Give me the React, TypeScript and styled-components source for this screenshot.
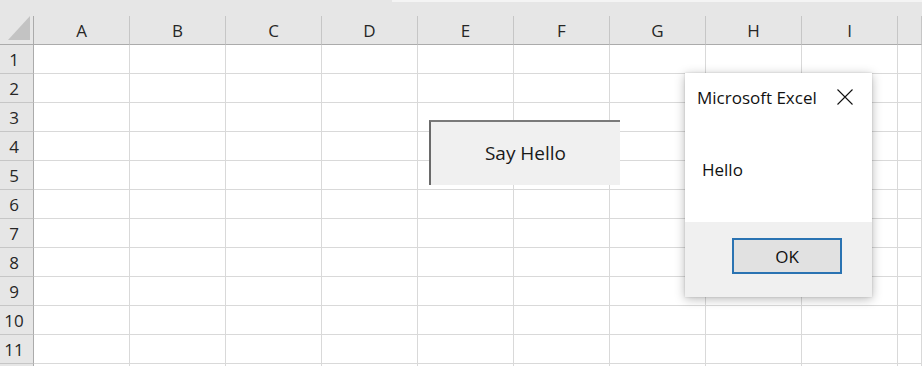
import React from "react";
import styled, { createGlobalStyle } from "styled-components";

const GlobalStyle = createGlobalStyle`
  html, body { margin: 0; padding: 0; background: #ffffff; }
  body { font-family: "Open Sans", "Noto Sans", "DejaVu Sans", sans-serif; }
`;

const COLS = ["A", "B", "C", "D", "E", "F", "G", "H", "I", ""];
const ROWS = ["1", "2", "3", "4", "5", "6", "7", "8", "9", "10", "11", ""];

const Page = styled.div`
  position: relative;
  width: 922px;
  height: 366px;
  overflow: hidden;
  background: #ffffff;
  display: flex;
  flex-direction: column;
`;

const TopStrip = styled.div`
  height: 16px;
  flex: none;
  background: #e6e6e6;
  display: flex;
  justify-content: flex-end;
`;

const TopHighlight = styled.div`
  width: 530px;
  height: 2px;
  background: #f4f4f4;
`;

const Sheet = styled.div`
  display: grid;
  grid-template-columns: 34px repeat(9, 96px) 1fr;
  grid-auto-rows: 29px;
`;

const Corner = styled.div`
  background: #e6e6e6;
  border-right: 1px solid #ababab;
  border-bottom: 1px solid #ababab;
  box-sizing: border-box;
  display: flex;
  align-items: flex-end;
  justify-content: flex-end;
  padding: 0 3px 4px 0;
`;

const CornerTriangle = styled.div`
  width: 22px;
  height: 24px;
  background: #c3c3c3;
  clip-path: polygon(100% 0, 100% 100%, 0 100%);
`;

const ColHeader = styled.div`
  background: #e6e6e6;
  border-right: 1px solid #c6c6c6;
  border-bottom: 1px solid #ababab;
  box-sizing: border-box;
  display: flex;
  align-items: center;
  justify-content: center;
  font-size: 17px;
  color: #262626;
  padding-top: 1px;
`;

const RowHeader = styled.div`
  background: #e6e6e6;
  border-right: 1px solid #ababab;
  border-bottom: 1px solid #c6c6c6;
  box-sizing: border-box;
  display: flex;
  align-items: center;
  justify-content: center;
  padding-right: 5px;
  font-size: 17px;
  color: #262626;
`;

const Cell = styled.div`
  border-right: 1px solid #d9d9d9;
  border-bottom: 1px solid #d9d9d9;
  box-sizing: border-box;
  background: #ffffff;
`;

const SheetButton = styled.div`
  position: absolute;
  left: 429px;
  top: 120px;
  width: 191px;
  height: 65px;
  box-sizing: border-box;
  background: #f0f0f0;
  border-top: 2px solid #7a7a7a;
  border-left: 2px solid #6a6a6a;
  display: flex;
  align-items: center;
  justify-content: center;
  font-size: 19px;
  color: #1a1a1a;
  padding-bottom: 2px;
`;

const Dialog = styled.div`
  position: absolute;
  left: 685px;
  top: 73px;
  width: 187px;
  height: 224px;
  display: flex;
  flex-direction: column;
  background: #ffffff;
  box-shadow: 0 2px 10px rgba(0, 0, 0, 0.28), 0 0 2px rgba(0, 0, 0, 0.15);
`;

const TitleBar = styled.div`
  height: 48px;
  flex: none;
  display: flex;
  align-items: center;
  justify-content: space-between;
  padding: 0 19px 0 12px;
  font-size: 17px;
  color: #111111;
`;

const Body = styled.div`
  flex: 1;
  display: flex;
  align-items: center;
  padding: 0 0 4px 17px;
  font-size: 17px;
  color: #111111;
`;

const Footer = styled.div`
  height: 75px;
  flex: none;
  box-sizing: border-box;
  background: #f0f0f0;
  display: flex;
  align-items: flex-start;
  justify-content: flex-end;
  padding: 16px 30px 0 0;
`;

const OkButton = styled.div`
  width: 110px;
  height: 36px;
  box-sizing: border-box;
  border: 2px solid #2a73b2;
  background: #e1e1e1;
  display: flex;
  align-items: center;
  justify-content: center;
  font-size: 17px;
  color: #111111;
`;

const CloseIcon = () => (
  <svg width="16" height="16" viewBox="0 0 16 16">
    <path d="M0.5 0.5 L15.5 15.5 M15.5 0.5 L0.5 15.5" stroke="#111" strokeWidth="1.1" fill="none" />
  </svg>
);

export default function App() {
  return (
    <>
      <GlobalStyle />
      <Page>
        <TopStrip>
          <TopHighlight />
        </TopStrip>
        <Sheet>
          <Corner>
            <CornerTriangle />
          </Corner>
          {COLS.map((c, i) => (
            <ColHeader key={`h${i}`}>{c}</ColHeader>
          ))}
          {ROWS.map((r, ri) => (
            <React.Fragment key={ri}>
              <RowHeader>{r}</RowHeader>
              {COLS.map((_, i) => (
                <Cell key={i} />
              ))}
            </React.Fragment>
          ))}
        </Sheet>
        <SheetButton>Say Hello</SheetButton>
        <Dialog>
          <TitleBar>
            <span>Microsoft Excel</span>
            <CloseIcon />
          </TitleBar>
          <Body>Hello</Body>
          <Footer>
            <OkButton>OK</OkButton>
          </Footer>
        </Dialog>
      </Page>
    </>
  );
}
